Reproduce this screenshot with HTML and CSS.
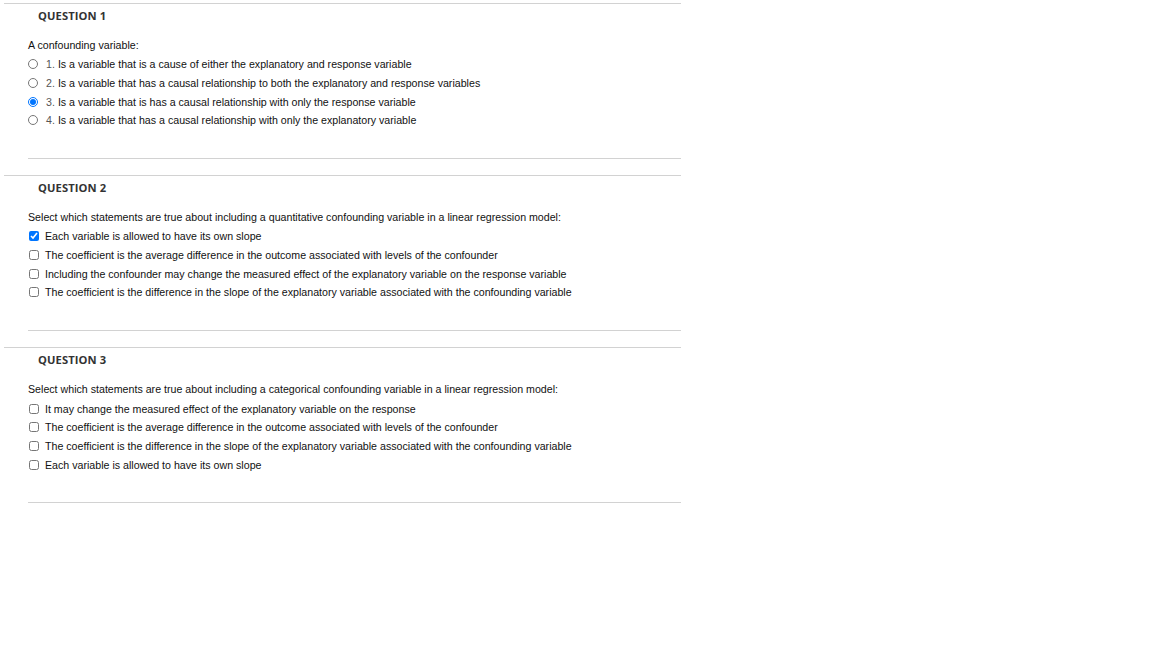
FILE: index.html
```html
<!DOCTYPE html>
<html lang="en">
<head>
<meta charset="utf-8">
<title>Quiz</title>
<link rel="stylesheet" href="styles.css">
</head>
<body>
<div class="quiz">
  <section class="question">
    <h2 class="q-title">QUESTION 1</h2>
    <div class="q-body">
      <p class="q-text">A confounding variable:</p>
      <ul class="answers">
        <li><label class="answer"><input type="radio" name="q1" class="radio"><span class="num">1.</span>Is a variable that is a cause of either the explanatory and response variable</label></li>
        <li><label class="answer"><input type="radio" name="q1" class="radio"><span class="num">2.</span>Is a variable that has a causal relationship to both the explanatory and response variables</label></li>
        <li><label class="answer"><input type="radio" name="q1" class="radio" checked><span class="num">3.</span>Is a variable that is has a causal relationship with only the response variable</label></li>
        <li><label class="answer"><input type="radio" name="q1" class="radio"><span class="num">4.</span>Is a variable that has a causal relationship with only the explanatory variable</label></li>
      </ul>
    </div>
    <hr class="q-end">
  </section>

  <section class="question">
    <h2 class="q-title">QUESTION 2</h2>
    <div class="q-body">
      <p class="q-text">Select which statements are true about including a quantitative confounding variable in a linear regression model:</p>
      <ul class="answers">
        <li><label class="answer"><input type="checkbox" class="check" checked>Each variable is allowed to have its own slope</label></li>
        <li><label class="answer"><input type="checkbox" class="check">The coefficient is the average difference in the outcome associated with levels of the confounder</label></li>
        <li><label class="answer"><input type="checkbox" class="check">Including the confounder may change the measured effect of the explanatory variable on the response variable</label></li>
        <li><label class="answer"><input type="checkbox" class="check">The coefficient is the difference in the slope of the explanatory variable associated with the confounding variable</label></li>
      </ul>
    </div>
    <hr class="q-end">
  </section>

  <section class="question">
    <h2 class="q-title">QUESTION 3</h2>
    <div class="q-body">
      <p class="q-text">Select which statements are true about including a categorical confounding variable in a linear regression model:</p>
      <ul class="answers">
        <li><label class="answer"><input type="checkbox" class="check">It may change the measured effect of the explanatory variable on the response</label></li>
        <li><label class="answer"><input type="checkbox" class="check">The coefficient is the average difference in the outcome associated with levels of the confounder</label></li>
        <li><label class="answer"><input type="checkbox" class="check">The coefficient is the difference in the slope of the explanatory variable associated with the confounding variable</label></li>
        <li><label class="answer"><input type="checkbox" class="check">Each variable is allowed to have its own slope</label></li>
      </ul>
    </div>
    <hr class="q-end">
  </section>
</div>
</body>
</html>
```

FILE: styles.css
```css
html, body {
  margin: 0;
  padding: 0;
  background: #fff;
}

body {
  font-family: "Liberation Sans", Arial, sans-serif;
  font-size: 10.65px;
  color: #111;
}

.quiz {
  width: 677px;
  margin-left: 4px;
  padding-top: 3px;
}

.question {
  border-top: 1px solid #d2d2d2;
  margin-bottom: 16px;
}

.q-title {
  margin: 0;
  height: 24px;
  line-height: 24px;
  padding-left: 34px;
  font-family: "Open Sans", sans-serif;
  font-weight: 700;
  font-size: 11.2px;
  color: #333;
  letter-spacing: 0.1px;
}

.q-body {
  padding-left: 24px;
  padding-top: 8px;
}

.q-text {
  margin: 0;
  height: 19px;
  line-height: 18px;
}

.answers {
  list-style: none;
  margin: 0;
  padding: 0;
}

.answers li {
  height: 18.67px;
}

.answer {
  display: flex;
  align-items: center;
  height: 100%;
  line-height: 18px;
}

.radio {
  width: 10px;
  height: 10px;
  margin: 0 8px 0 0;
  flex: none;
}

.check {
  width: 10px;
  height: 10px;
  margin: 0 6px 0 1px;
  flex: none;
}

.num {
  color: #555;
  margin-right: 3px;
}

.q-end {
  margin: 28.5px 0 0 24px;
  border: 0;
  border-top: 1px solid #d2d2d2;
  height: 0;
}
```
